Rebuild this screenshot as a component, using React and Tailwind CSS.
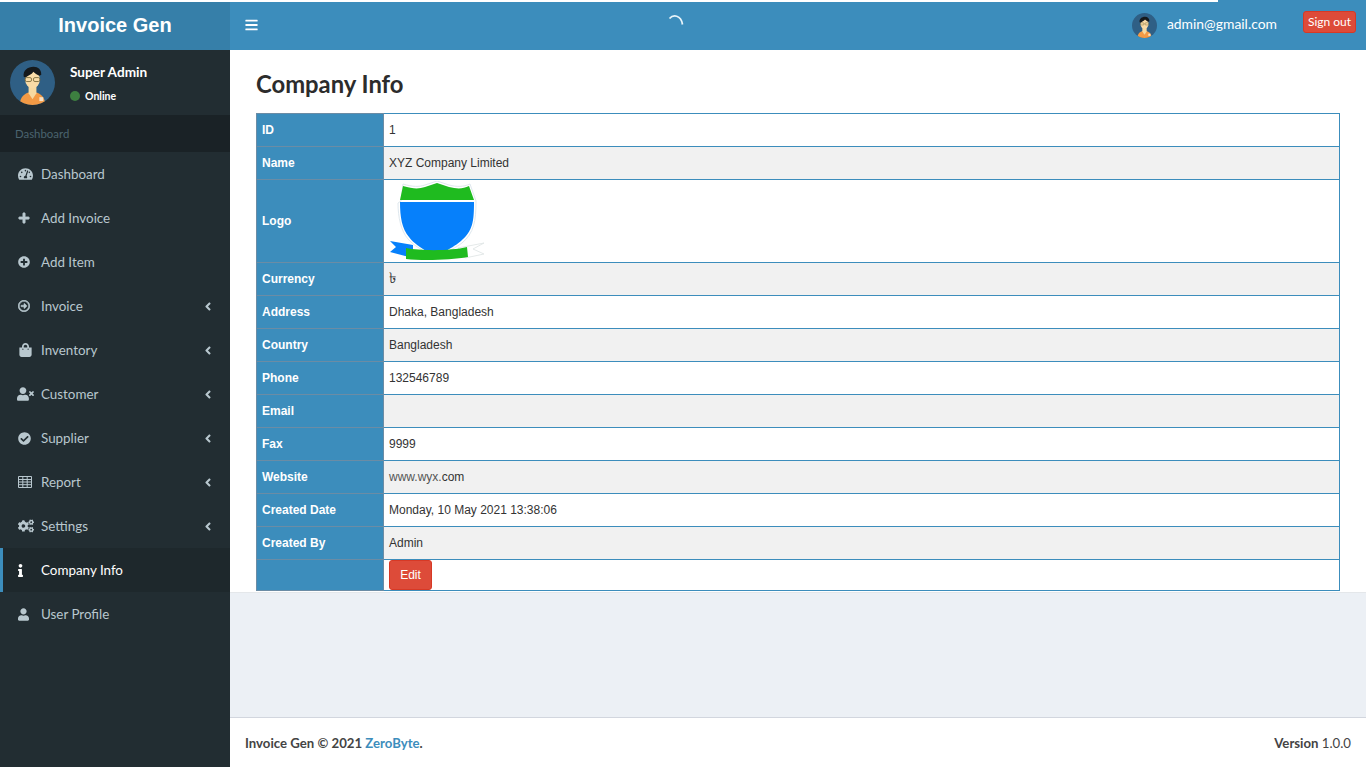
import React from "react";
import { FaTachometerAlt, FaPlus, FaPlusCircle, FaRegArrowAltCircleRight, FaShoppingBag, FaUserTimes, FaCheckCircle, FaCogs, FaInfo, FaUser, FaBars, FaAngleLeft } from "react-icons/fa";

function Avatar({ className }) {
  return (
    <svg viewBox="0 0 46 46" className={className}>
      <defs><clipPath id="avc"><circle cx="23" cy="23" r="23" /></clipPath></defs>
      <circle cx="23" cy="23" r="23" fill="#2f5f85" />
      <g clipPath="url(#avc)">
        <path d="M10 46c0-8 5-12 10-13h6c5 1 10 5 10 13z" fill="#f39a45" />
        <path d="M19 26h8v8l-4 6-4-6z" fill="#f7d9a0" />
        <ellipse cx="23" cy="20" rx="7.5" ry="9" fill="#f9dba6" />
        <path d="M14 17c-1-6 4-10 10-10 5 0 8 3 8 8l-2 1c-3-1-5-3-6-4-2 3-6 4-8 6z" fill="#15191c" />
        <rect x="15.5" y="18" width="6.5" height="4" rx="1.5" fill="none" stroke="#7a6a3a" strokeWidth="0.9" />
        <rect x="24" y="18" width="6.5" height="4" rx="1.5" fill="none" stroke="#7a6a3a" strokeWidth="0.9" />
        <rect x="30" y="38" width="4" height="4" fill="#f7e3c8" />
      </g>
    </svg>
  );
}

function TableIcon({ className }) {
  return (
    <svg viewBox="0 0 14 12" className={className}>
      <path d="M.5.5h13v11H.5zM.5 3.5h13M.5 6h13M.5 8.7h13M4.8.5v11M9.2.5v11" fill="none" stroke="currentColor" strokeWidth="1" />
    </svg>
  );
}

function Logo() {
  return (
    <svg viewBox="0 0 96 80" className="block w-[96px] h-[80px]">
      <path d="M12 20L14 3C24 6 30 6 36 4C40 3 44 1 48 0C52 1 56 3 60 4C68 6 74 6 81 3L87 20C87 40 85 52 73 62C66 67 60 70 57 71H37C33 69 24 64 19 58C12 50 9 36 9 22z" fill="#fff" stroke="#dfe8ee" strokeWidth="1" />
      <path d="M11 19L14 5C24 8 30 8 36 6C40 5 44 3 48 2C52 3 56 5 60 6C68 8 74 8 80 5L85 19z" fill="#1fbb1f" />
      <path d="M11 21H85C85 40 84 50 72 60C66 65 60 68 57 70H37C34 68 24 62 20 56C13 48 11 36 11 21z" fill="#0680fb" />
      <path d="M1 60L24 64V74L20 76L1 71L7 66z" fill="#0680fb" />
      <path d="M69 67L95 62L84 68L95 73L76 77z" fill="#fff" stroke="#dde3e3" strokeWidth="0.8" />
      <path d="M17 67C32 70 62 70 78 66L79 76C62 79 34 80 17 78z" fill="#1fbb1f" />
    </svg>
  );
}

const menu = [
  ["Dashboard", FaTachometerAlt, false],
  ["Add Invoice", FaPlus, false],
  ["Add Item", FaPlusCircle, false],
  ["Invoice", FaRegArrowAltCircleRight, true],
  ["Inventory", FaShoppingBag, true],
  ["Customer", FaUserTimes, true],
  ["Supplier", FaCheckCircle, true],
  ["Report", TableIcon, true],
  ["Settings", FaCogs, true],
  ["Company Info", FaInfo, false, true],
  ["User Profile", FaUser, false],
];

const rows = [
  ["ID", "1"],
  ["Name", "XYZ Company Limited"],
  ["Logo", "logo"],
  ["Currency", "taka"],
  ["Address", "Dhaka, Bangladesh"],
  ["Country", "Bangladesh"],
  ["Phone", "132546789"],
  ["Email", ""],
  ["Fax", "9999"],
  ["Website", "site"],
  ["Created Date", "Monday, 10 May 2021 13:38:06"],
  ["Created By", "Admin"],
  ["", "edit"],
];

function Cell({ v }) {
  if (v === "logo") return <Logo />;
  if (v === "taka") return <span className="text-[15px] font-['DejaVu_Sans',sans-serif] leading-none">৳</span>;
  if (v === "site") return <span><span className="text-[#555]">www.wyx.</span>com</span>;
  if (v === "edit")
    return (
      <button className="block w-[43px] h-[30px] -mt-[1px] bg-[#dd4b39] border border-[#d73925] rounded-[3px] text-white text-[12px]">Edit</button>
    );
  return v;
}

const iconSize = {
  Dashboard: "w-[15px] h-[14px]",
  "Add Invoice": "w-[12px] h-[12px] stroke-[30]",
  "Add Item": "w-[12px] h-[12px]",
  Invoice: "w-[12px] h-[12px] stroke-[24]",
  Inventory: "w-[15px] h-[14px]",
  Customer: "w-[17px] h-[14px] -ml-[1px]",
  Supplier: "w-[13px] h-[13px]",
  Report: "w-[14px] h-[12px]",
  Settings: "w-[16px] h-[14px]",
  "Company Info": "w-[7px] h-[13px] -ml-[1px]",
  "User Profile": "w-[11px] h-[13px]",
};

export default function App() {
  return (
    <div className="relative flex h-[767px] overflow-hidden bg-[#ecf0f5] font-['Lato','Noto_Sans',sans-serif] text-[#333]">
      <div className="absolute left-0 top-0 w-[1218px] h-[2px] bg-white z-10" />
      <aside className="w-[230px] shrink-0 bg-[#222d32] flex flex-col">
        <div className="h-[50px] bg-[#367fa9] flex items-center justify-center text-white text-[20px] font-bold font-['Liberation_Sans',sans-serif]">
          Invoice Gen
        </div>
        <div className="h-[65px] flex items-center pl-[10px] pt-[10px] pb-[10px]">
          <Avatar className="w-[45px] h-[45px]" />
          <div className="ml-[15px] mt-[2px] text-white">
            <div className="text-[13.6px] font-bold leading-[20px] -mt-[1px]">Super Admin</div>
            <div className="flex items-center mt-[6px] text-[10.5px] font-bold leading-[16px]">
              <span className="w-[10px] h-[10px] rounded-full bg-[#3d7f40] mr-[5px]" />
              Online
            </div>
          </div>
        </div>
        <div className="h-[37px] bg-[#1a2226] text-[#4b646f] text-[11.4px] pl-[15px] flex items-center">Dashboard</div>
        <nav className="flex flex-col">
          {menu.map(([label, Icon, arrow, active]) => (
            <div
              key={label}
              className={
                active
                  ? "h-[44px] flex items-center bg-[#1e282c] border-l-[3px] border-[#3c8dbc] pl-[15px] pr-[15px] text-white text-[13.4px]"
                  : "h-[44px] flex items-center border-l-[3px] border-transparent pl-[15px] pr-[15px] text-[#b8c7ce] text-[13.4px]"
              }
            >
              <span className="w-[23px] shrink-0 flex">
                <Icon className={iconSize[label]} />
              </span>
              <span className="flex-1">{label}</span>
              {arrow && <FaAngleLeft className="w-[12px] h-[13px] mr-[1px]" />}
            </div>
          ))}
        </nav>
      </aside>

      <main className="flex-1 min-w-0 flex flex-col">
        <header className="h-[50px] bg-[#3c8dbc] flex items-center text-white shrink-0">
          <FaBars className="ml-[15px] w-[13px] h-[14px]" />
          <svg viewBox="0 0 16 16" className="absolute left-[668px] top-[14px] w-[16px] h-[16px]">
            <path d="M1.5 4.5C5 .5 13 .5 14.5 10.5" fill="none" stroke="#e8f4fa" strokeWidth="1.8" />
          </svg>
          <div className="ml-auto flex items-center">
            <Avatar className="w-[25px] h-[25px]" />
            <span className="ml-[10px] text-[13.9px] -mt-[1px]">admin@gmail.com</span>
            <button className="ml-[26px] mr-[10px] -mt-[7px] w-[53px] h-[22px] bg-[#dd4b39] border border-[#d73925] rounded-[3px] text-white text-[12px] leading-[18px]">Sign out</button>
          </div>
        </header>

        <section className="h-[543px] shrink-0 bg-white border-b border-[#e4e7ea] pl-[26px] pr-[26px] pt-[19px]">
          <h1 className="text-[23.8px] font-bold leading-[31px] text-[#2c2c2c] mb-[13px]">Company Info</h1>
          <table className="w-[1084px] border-collapse border border-[#3c8dbc] font-['Liberation_Sans',sans-serif] text-[12px] table-fixed">
            <tbody>
              {rows.map(([k, v], i) => (
                <tr key={i} className={v === "logo" ? "h-[83px]" : v === "edit" ? "h-[31px]" : "h-[33px]"}>
                  <th className="w-[127px] bg-[#3c8dbc] border border-[#6b8ca5] text-white text-left font-bold px-[5px] py-0">{k}</th>
                  <td className={i % 2 === 1 && v !== "logo" ? "border border-[#3c8dbc] bg-[#f1f1f1] text-[#333] px-[5px] py-0" : "border border-[#3c8dbc] bg-white text-[#333] px-[5px] py-0"}>
                    <Cell v={v} />
                  </td>
                </tr>
              ))}
            </tbody>
          </table>
        </section>

        <div className="flex-1" />

        <footer className="h-[50px] shrink-0 bg-white border-t border-[#d2d6de] flex items-center justify-between px-[15px] pt-[2px] text-[13.2px] text-[#444]">
          <div className="font-bold">Invoice Gen © 2021 <span className="text-[#3c8dbc]">ZeroByte</span>.</div>
          <div><span className="font-bold">Version</span> 1.0.0</div>
        </footer>
      </main>
    </div>
  );
}
